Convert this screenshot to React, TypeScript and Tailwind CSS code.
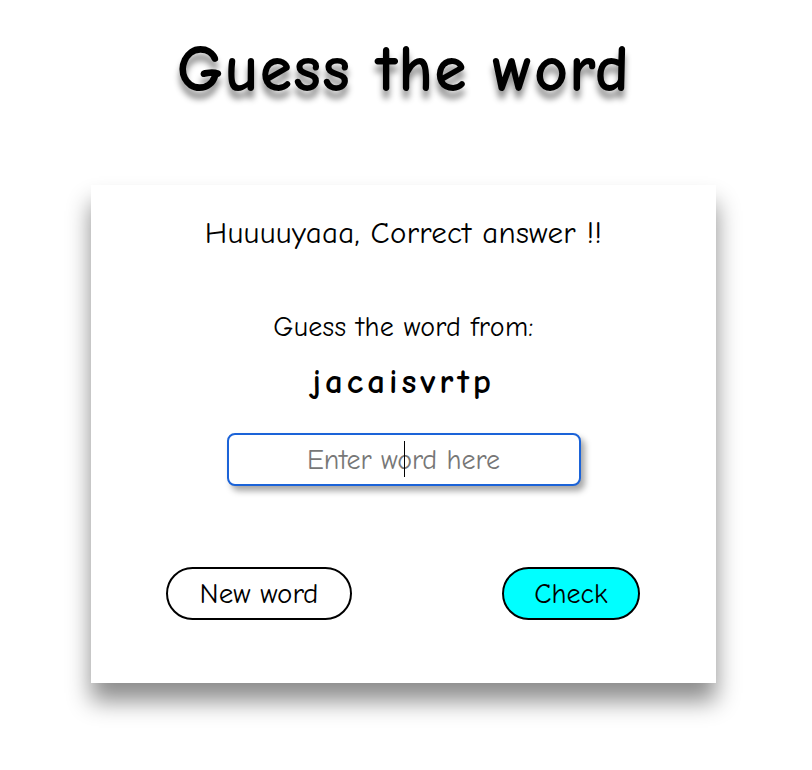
export default function App() {
  return (
    <div
      className="min-h-[770px] w-full bg-white flex flex-col items-center pr-[5px] text-black"
      style={{ fontFamily: '"Comic Sans MS", "Comic Neue", "Noto Sans", sans-serif' }}
    >
      <h1 className="mt-[30px] text-[66px] leading-[80px] font-bold tracking-[1px] [text-shadow:0_8px_6px_rgba(0,0,0,0.45)]">
        Guess the word
      </h1>

      <div className="mt-[75px] w-[625px] h-[498px] bg-white shadow-[0_18px_22px_rgba(0,0,0,0.45)] flex flex-col items-center">
        <p className="mt-[30px] text-[31px] leading-[36px] tracking-[0.3px]">Huuuuyaaa, Correct answer !!</p>

        <p className="mt-[61px] text-[28px] leading-[30px] tracking-[0.3px]">Guess the word from:</p>
        <p className="mt-[22px] text-[35px] leading-[36px] font-bold tracking-[4px]">jacaisvrtp</p>

        <div className="mt-[33px] relative w-[354px] h-[53px]">
          <input
            placeholder="Enter word here"
            className="w-full h-full rounded-[8px] border-2 border-[#1b63d8] bg-white text-center text-[28px] text-black placeholder:text-[#777777] outline-none shadow-[4px_5px_6px_rgba(0,0,0,0.35)]"
          />
          <span className="absolute left-[177px] top-[8px] w-[1px] h-[36px] bg-black" />
        </div>

        <div className="mt-[81px] w-full flex justify-between pl-[75px] pr-[76px]">
          <button className="w-[186px] h-[53px] rounded-full border-2 border-black bg-white text-[29px]">
            New word
          </button>
          <button className="w-[138px] h-[53px] rounded-full border-2 border-black bg-[#00ffff] text-[28px]">
            Check
          </button>
        </div>
      </div>
    </div>
  );
}
